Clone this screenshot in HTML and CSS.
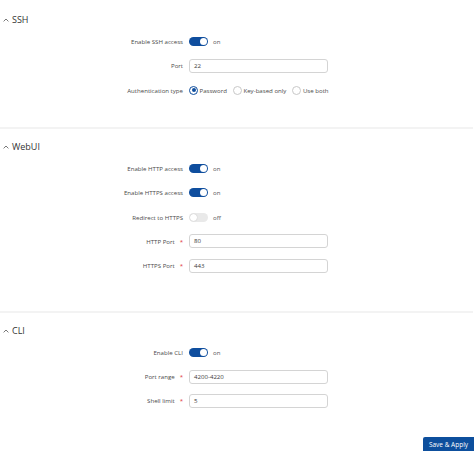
FILE: index.html
```html
<!DOCTYPE html>
<html>
<head>
<meta charset="utf-8">
<link rel="stylesheet" href="styles.css">
</head>
<body>
<section class="sec first">
  <div class="sec-head">
    <svg class="chev" width="6" height="4" viewBox="0 0 6 4"><path d="M0.6 3.4 L3 1 L5.4 3.4" fill="none" stroke="#555" stroke-width="0.8"/></svg>
    <span>SSH</span>
  </div>
  <div class="rows">
    <div class="row"><span class="lbl">Enable SSH access</span><div class="ctl"><span class="toggle on"></span><span class="state">on</span></div></div>
    <div class="row"><span class="lbl">Port</span><div class="ctl"><div class="input">22</div></div></div>
    <div class="row"><span class="lbl">Authentication type</span><div class="ctl radios">
      <span class="radio"><span class="dot checked"></span>Password</span>
      <span class="radio"><span class="dot"></span>Key-based only</span>
      <span class="radio"><span class="dot"></span>Use both</span>
    </div></div>
  </div>
</section>
<section class="sec web">
  <div class="sec-head">
    <svg class="chev" width="6" height="4" viewBox="0 0 6 4"><path d="M0.6 3.4 L3 1 L5.4 3.4" fill="none" stroke="#555" stroke-width="0.8"/></svg>
    <span>WebUI</span>
  </div>
  <div class="rows">
    <div class="row"><span class="lbl">Enable HTTP access</span><div class="ctl"><span class="toggle on"></span><span class="state">on</span></div></div>
    <div class="row"><span class="lbl">Enable HTTPS access</span><div class="ctl"><span class="toggle on"></span><span class="state">on</span></div></div>
    <div class="row"><span class="lbl">Redirect to HTTPS</span><div class="ctl"><span class="toggle"></span><span class="state">off</span></div></div>
    <div class="row"><span class="lbl">HTTP Port<span class="req">*</span></span><div class="ctl"><div class="input">80</div></div></div>
    <div class="row"><span class="lbl">HTTPS Port<span class="req">*</span></span><div class="ctl"><div class="input">443</div></div></div>
  </div>
</section>
<section class="sec cli">
  <div class="sec-head">
    <svg class="chev" width="6" height="4" viewBox="0 0 6 4"><path d="M0.6 3.4 L3 1 L5.4 3.4" fill="none" stroke="#555" stroke-width="0.8"/></svg>
    <span>CLI</span>
  </div>
  <div class="rows">
    <div class="row"><span class="lbl">Enable CLI</span><div class="ctl"><span class="toggle on"></span><span class="state">on</span></div></div>
    <div class="row"><span class="lbl">Port range<span class="req">*</span></span><div class="ctl"><div class="input">4200-4220</div></div></div>
    <div class="row"><span class="lbl">Shell limit<span class="req">*</span></span><div class="ctl"><div class="input">5</div></div></div>
  </div>
</section>
<div class="footer"><button class="btn">Save &amp; Apply</button></div>
</body>
</html>
```
FILE: styles.css
```css
html, body {
  margin: 0;
  padding: 0;
  background: #fff;
}
body {
  font-family: "Open Sans", "Noto Sans", sans-serif;
  color: #4a4a4a;
  width: 474px;
  overflow: hidden;
}
.sec {
  width: 473px;
  padding: 11px 0 38px;
  border-bottom: 2px solid #f3f3f3;
}
.sec.first {
  padding-top: 13px;
  padding-bottom: 30px;
}
.sec.cli {
  border-bottom: none;
  padding-bottom: 0;
}
.sec-head {
  display: flex;
  align-items: center;
  height: 14px;
  padding-left: 3px;
  gap: 3px;
  font-size: 9px;
  font-weight: 500;
  line-height: 14px;
  color: #333;
  margin-bottom: 7.5px;
}
.chev {
  display: block;
}
.rows {
  display: flex;
  flex-direction: column;
  gap: 10.3px;
}
.row {
  display: flex;
  align-items: center;
  height: 14px;
  font-size: 6.1px;
}
.lbl {
  width: 183px;
  text-align: right;
  color: #4a4a4a;
  white-space: nowrap;
}
.req {
  color: #e0383e;
  margin-left: 5px;
}
.ctl {
  margin-left: 6px;
  display: flex;
  align-items: center;
}
.toggle {
  position: relative;
  width: 19px;
  height: 9px;
  border-radius: 5px;
  background: #e9e9e9;
  display: inline-block;
}
.toggle::after {
  content: "";
  position: absolute;
  top: 1px;
  left: 1px;
  width: 7px;
  height: 7px;
  border-radius: 50%;
  background: #fff;
  box-shadow: 0 0 1px rgba(0,0,0,0.3);
}
.toggle.on {
  background: #0f4e9e;
}
.toggle.on::after {
  left: 11px;
  box-shadow: none;
}
.state {
  margin-left: 5px;
  color: #555;
}
.input {
  box-sizing: border-box;
  width: 139px;
  height: 14px;
  border: 1px solid #d4d4d4;
  border-radius: 3px;
  padding-left: 4px;
  line-height: 12px;
  color: #3a3a3a;
  font-size: 6.1px;
}
.radios {
  gap: 6px;
  color: #4a4a4a;
}
.radio {
  display: flex;
  align-items: center;
}
.dot {
  box-sizing: border-box;
  width: 9px;
  height: 9px;
  border-radius: 50%;
  border: 1px solid #c8c8c8;
  margin-right: 1.5px;
  position: relative;
}
.dot.checked {
  border-color: #0f4e9e;
}
.dot.checked::after {
  content: "";
  position: absolute;
  top: 1.5px;
  left: 1.5px;
  width: 4px;
  height: 4px;
  border-radius: 50%;
  background: #0f4e9e;
}
.footer {
  display: flex;
  justify-content: flex-end;
  padding-top: 29.5px;
}
.btn {
  width: 51px;
  height: 16px;
  border: none;
  border-radius: 2px 0 0 0;
  background: #0d4f9d;
  color: #fff;
  font-family: "Open Sans", "Noto Sans", sans-serif;
  font-size: 6.5px;
  padding: 0;
  margin: 0;
  text-align: center;
  line-height: 14px;
}
```
